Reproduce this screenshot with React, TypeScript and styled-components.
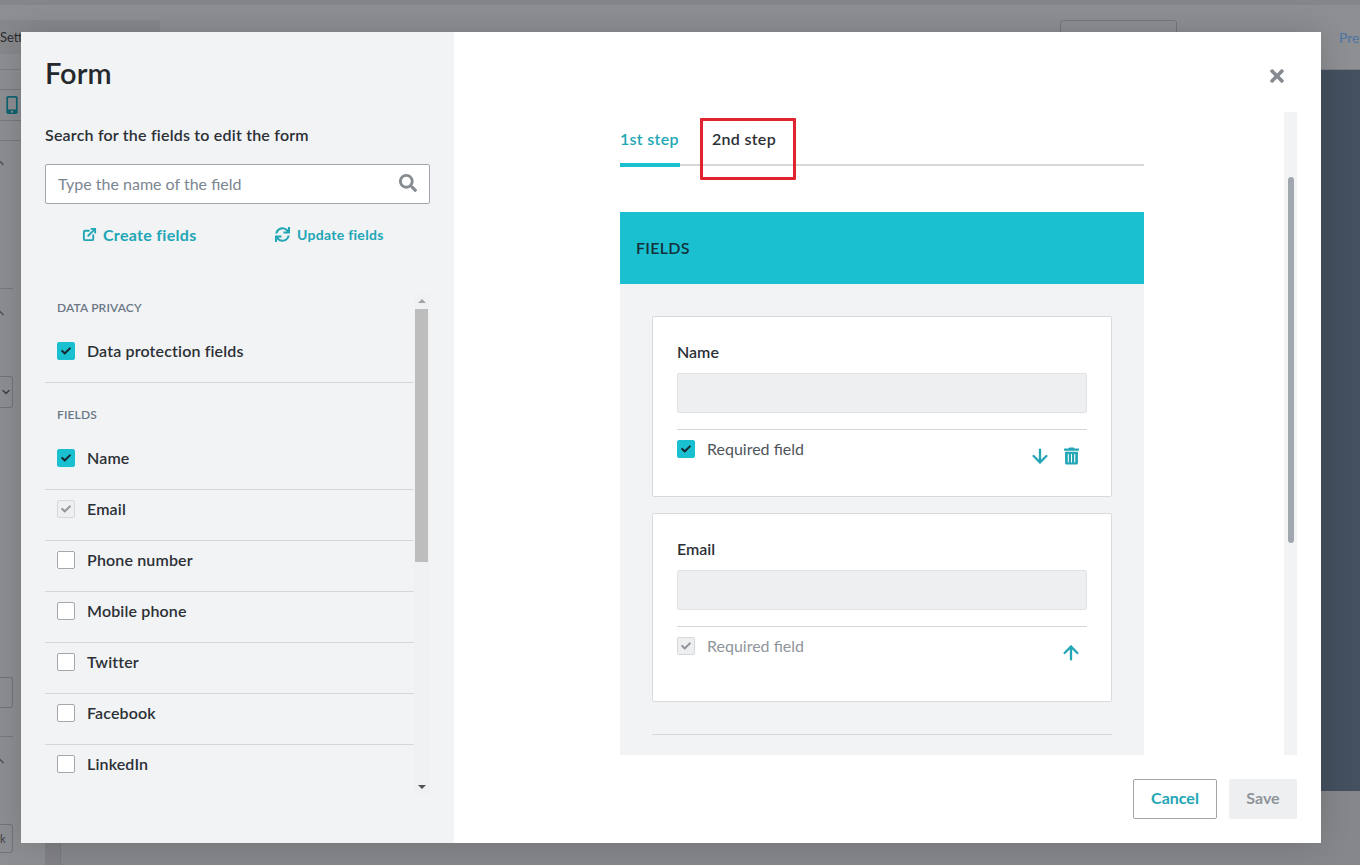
import React from 'react';
import styled, { createGlobalStyle } from 'styled-components';
import { FaCheck, FaMobileAlt, FaSearch, FaSync, FaTimes, FaTrashAlt } from 'react-icons/fa';
import { ArrowDown, ArrowUp, ChevronDown, ChevronUp, ExternalLink } from 'lucide-react';

const FONT = `"Lato", "Noto Sans", "Liberation Sans", sans-serif`;
const TEAL = '#1ac0cf';
const TEAL_TEXT = '#22a6b5';
const INK = '#2c3035';

const GlobalStyle = createGlobalStyle`
  html, body { margin: 0; padding: 0; background: #8d8e92; }
  * { box-sizing: border-box; }
  body { font-family: ${FONT}; color: ${INK}; }
`;

// ---- dimmed page behind the modal ----
const Page = styled.div`
  position: relative;
  width: 1360px;
  height: 865px;
  overflow: hidden;
  background: #8d8e92;
`;

const TopStrip = styled.div`
  height: 5px;
  background: #85868a;
`;

const Toolbar = styled.div`
  height: 65px;
  display: flex;
  align-items: flex-start;
  padding-top: 15px;
  background: #8e8f93;
  border-bottom: 1px solid #7d7e82;
`;

const ToolbarTab = styled.div`
  width: 160px;
  height: 34px;
  flex: none;
  padding-top: 9px;
  font-size: 13px;
  color: #2c2d30;
  background: #87888c;
  border-radius: 0 3px 0 0;
`;

const ToolbarButton = styled.div`
  width: 117px;
  height: 30px;
  flex: none;
  margin-left: 900px;
  border: 1px solid #77787c;
  border-radius: 3px;
`;

const ToolbarLink = styled.div`
  flex: none;
  margin-left: 162px;
  padding-top: 9px;
  font-size: 14px;
  white-space: nowrap;
  color: #4b76a6;
`;

const Workspace = styled.div`
  display: flex;
  height: 795px;
`;

const SideCol = styled.div`
  width: 45px;
  flex: none;
  color: #45474b;
`;

const SideRule = styled.div<{ $top: number; $short?: boolean }>`
  width: ${({ $short }) => ($short ? '13px' : '45px')};
  height: 1px;
  margin-top: ${({ $top }) => $top}px;
  background: #77787c;
`;

const SideIcon = styled.div<{ $top: number }>`
  height: 18px;
  margin-top: ${({ $top }) => $top}px;
  padding-left: 3px;
  color: #0e6470;
  font-size: 18px;
  line-height: 18px;
`;

const SideChevron = styled(ChevronUp)<{ $top: number }>`
  display: block;
  width: 14px;
  height: 12px;
  margin-top: ${({ $top }) => $top}px;
  margin-left: -7px;
  color: #4c4e52;
`;

const SideBox = styled.div<{ $top: number; $h: number }>`
  display: flex;
  align-items: center;
  width: 13px;
  height: ${({ $h }) => $h}px;
  margin-top: ${({ $top }) => $top}px;
  border: 1px solid #727377;
  border-left: none;
  border-radius: 0 3px 3px 0;
  font-size: 11px;
  color: #3f4044;
`;

const Gutter = styled.div`
  width: 16px;
  flex: none;
  background: #808185;
  border-right: 1px solid #76777b;
`;

const Stage = styled.div`
  flex: 1;
  display: flex;
  flex-direction: column;
`;

const DarkCanvas = styled.div`
  height: 721px;
  background: #44505f;
`;

const BottomBar = styled.div`
  flex: 1;
  background: #86878b;
`;

// ---- modal ----
const Modal = styled.div`
  position: absolute;
  left: 21px;
  top: 32px;
  width: 1300px;
  height: 811px;
  display: flex;
  background: #fff;
  box-shadow: 0 0 30px rgba(0, 0, 0, 0.16);
`;

const Sidebar = styled.aside`
  width: 433px;
  flex: none;
  padding: 0 24px;
  background: #f1f3f5;
`;

const Title = styled.h1`
  margin: 0;
  padding-top: 22px;
  font-size: 29px;
  line-height: 38px;
  font-weight: 600;
  color: #24282c;
`;

const SearchLabel = styled.div`
  margin-top: 33px;
  font-size: 16px;
  letter-spacing: 0.2px;
  line-height: 20px;
  font-weight: 600;
`;

const SearchBox = styled.div`
  display: flex;
  align-items: center;
  justify-content: space-between;
  height: 40px;
  width: 385px;
  margin-top: 19px;
  padding: 0 12px 2px;
  background: #fff;
  border: 1px solid #a2a6ab;
  border-radius: 2px;
  font-size: 16px;
  color: #7c8691;
`;

const SearchIcon = styled(FaSearch)`
  width: 18px;
  height: 18px;
  color: #858b91;
`;

const LinkRow = styled.div`
  display: flex;
  width: 385px;
  height: 22px;
  margin-top: 19px;
  padding-left: 37px;
`;

const ActionLink = styled.a<{ $size: number; $w: number }>`
  display: flex;
  align-items: center;
  gap: 6px;
  width: ${({ $w }) => $w}px;
  font-size: ${({ $size }) => $size}px;
  letter-spacing: 0.3px;
  font-weight: 700;
  color: ${TEAL_TEXT};
`;

const LinkOut = styled(ExternalLink)`
  width: 15px;
  height: 15px;
`;

const LinkSync = styled(FaSync)`
  width: 15px;
  height: 15px;
  margin-right: 1px;
`;

const ListWrap = styled.div`
  display: flex;
  width: 385px;
  height: 502px;
  margin-top: 48px;
  overflow: hidden;
`;

const FieldList = styled.div`
  width: 369px;
  flex: none;
`;

const GroupLabel = styled.div<{ $top: number }>`
  padding: ${({ $top }) => $top}px 0 0 12px;
  margin-bottom: 16px;
  font-size: 12px;
  letter-spacing: 0.15px;
  line-height: 16px;
  font-weight: 600;
  color: #6b7785;
`;

const FieldRow = styled.div`
  display: flex;
  gap: 12px;
  padding: 10px 12px 22px;
  border-bottom: 1px solid #d5d7da;
  font-size: 16px;
  letter-spacing: 0.15px;
  line-height: 18px;
  font-weight: 600;
  color: ${INK};
  &:last-child {
    border-bottom: none;
  }
`;

const Box = styled.span<{ $state: 'on' | 'off' | 'locked' }>`
  display: flex;
  align-items: center;
  justify-content: center;
  width: 18px;
  height: 18px;
  flex: none;
  border-radius: 2px;
  font-size: 10px;
  background: ${({ $state }) => ($state === 'on' ? TEAL : $state === 'off' ? '#fff' : '#eeeff1')};
  border: 1px solid ${({ $state }) => ($state === 'on' ? TEAL : $state === 'off' ? '#a4a8ad' : '#d5d7da')};
  color: ${({ $state }) => ($state === 'on' ? '#17252e' : '#8f959b')};
`;

const ListTrack = styled.div`
  width: 16px;
  height: 502px;
  flex: none;
  display: flex;
  flex-direction: column;
  align-items: center;
  background: #f0f1f2;
`;

const ArrowCell = styled.div<{ $down?: boolean }>`
  height: 16px;
  flex: none;
  display: flex;
  align-items: center;
  margin-top: ${({ $down }) => ($down ? 'auto' : '0')};
  &::before {
    content: '';
    border-left: 4px solid transparent;
    border-right: 4px solid transparent;
    border-bottom: ${({ $down }) => ($down ? '0' : '4px solid #a3a3a3')};
    border-top: ${({ $down }) => ($down ? '4px solid #505050' : '0')};
  }
`;

const ListThumb = styled.div`
  width: 13px;
  height: 253px;
  margin-right: 1px;
  background: #bdbdbd;
`;

const Main = styled.main`
  flex: 1;
  display: flex;
  flex-direction: column;
  padding-right: 24px;
`;

const CloseRow = styled.div`
  height: 80px;
  flex: none;
  display: flex;
  justify-content: flex-end;
  padding: 34px 13px 0 0;
`;

const CloseIcon = styled(FaTimes)`
  width: 14px;
  height: 20px;
  color: #858b91;
`;

const ScrollArea = styled.div`
  height: 643px;
  flex: none;
  display: flex;
  justify-content: space-between;
  padding-left: 166px;
  overflow: hidden;
`;

const Content = styled.div`
  width: 524px;
  flex: none;
`;

const Tabs = styled.div`
  position: relative;
  display: flex;
  gap: 32px;
  height: 54px;
  border-bottom: 2px solid #d8d8dc;
`;

const Tab = styled.div<{ $active?: boolean }>`
  height: 55px;
  padding-top: 17px;
  width: ${({ $active }) => ($active ? '60px' : 'auto')};
  font-size: 16px;
  letter-spacing: 0.3px;
  line-height: 20px;
  font-weight: 600;
  white-space: nowrap;
  color: ${({ $active }) => ($active ? TEAL_TEXT : INK)};
  border-bottom: ${({ $active }) => ($active ? `4px solid ${TEAL}` : 'none')};
`;

// annotation drawn over the tab in the screenshot
const Highlight = styled.div`
  position: absolute;
  left: 80px;
  top: 6px;
  width: 96px;
  height: 62px;
  border: 3px solid #e0232e;
  border-radius: 1px;
`;

const PanelHead = styled.div`
  display: flex;
  align-items: center;
  height: 72px;
  margin-top: 46px;
  padding: 0 0 2px 16px;
  background: ${TEAL};
  font-size: 16px;
  letter-spacing: 0.3px;
  font-weight: 600;
  color: #14303a;
`;

const Panel = styled.div`
  display: flex;
  flex-direction: column;
  gap: 16px;
  padding: 32px;
  background: #f1f3f5;
`;

const Card = styled.div<{ $h: number }>`
  height: ${({ $h }) => $h}px;
  padding: 25px 24px 0;
  background: #fff;
  border: 1px solid #d8dadd;
  border-radius: 2px;
`;

const CardLabel = styled.div`
  font-size: 16px;
  line-height: 20px;
  font-weight: 600;
  color: ${INK};
`;

const FakeInput = styled.div`
  height: 40px;
  margin-top: 11px;
  background: #eeeff1;
  border: 1px solid #e0e2e5;
  border-radius: 2px;
`;

const CardFoot = styled.div`
  display: flex;
  align-items: flex-start;
  gap: 12px;
  margin-top: 16px;
  padding-top: 10px;
  border-top: 1px solid #d5d7da;
`;

const RequiredText = styled.span<{ $muted?: boolean }>`
  font-size: 16px;
  line-height: 18px;
  color: ${({ $muted }) => ($muted ? '#8f959b' : '#50555b')};
`;

const CardTools = styled.div`
  display: flex;
  align-items: center;
  gap: 13px;
  height: 18px;
  margin: 7px 8px 0 auto;
  color: ${TEAL_TEXT};
`;

const MoveDown = styled(ArrowDown)`
  width: 22px;
  height: 22px;
`;

const MoveUp = styled(ArrowUp)`
  width: 22px;
  height: 22px;
  margin-right: -3px;
`;

const TrashIcon = styled(FaTrashAlt)`
  width: 15px;
  height: 18px;
`;

const PanelRule = styled.div`
  height: 1px;
  margin-top: 16px;
  background: #d5d7da;
`;

const PageTrack = styled.div`
  width: 13px;
  height: 643px;
  flex: none;
  padding-top: 65px;
  display: flex;
  justify-content: center;
  background: #f1f3f5;
`;

const PageThumb = styled.div`
  width: 6px;
  height: 366px;
  border-radius: 3px;
  background: #a0a7ae;
`;

const Footer = styled.div`
  display: flex;
  justify-content: flex-end;
  gap: 12px;
  padding-top: 24px;
`;

const Button = styled.button<{ $primary?: boolean; $w: number }>`
  width: ${({ $w }) => $w}px;
  height: 40px;
  padding: 0 0 3px;
  font-family: ${FONT};
  font-size: 16px;
  font-weight: 700;
  border-radius: 2px;
  background: ${({ $primary }) => ($primary ? '#eeeff1' : '#fff')};
  border: 1px solid ${({ $primary }) => ($primary ? '#eeeff1' : '#a0a5aa')};
  color: ${({ $primary }) => ($primary ? '#8f959b' : TEAL_TEXT)};
`;

const Check = ({ state }: { state: 'on' | 'off' | 'locked' }) => (
  <Box $state={state}>{state !== 'off' && <FaCheck />}</Box>
);

const fields: { name: string; state: 'on' | 'off' | 'locked' }[] = [
  { name: 'Name', state: 'on' },
  { name: 'Email', state: 'locked' },
  { name: 'Phone number', state: 'off' },
  { name: 'Mobile phone', state: 'off' },
  { name: 'Twitter', state: 'off' },
  { name: 'Facebook', state: 'off' },
  { name: 'LinkedIn', state: 'off' },
];

export default function App() {
  return (
    <Page>
      <GlobalStyle />
      <TopStrip />
      <Toolbar>
        <ToolbarTab>Settings</ToolbarTab>
        <ToolbarButton />
        <ToolbarLink>Preview</ToolbarLink>
      </Toolbar>
      <Workspace>
        <SideCol>
          <SideRule $top={19} />
          <SideIcon $top={6}><FaMobileAlt /></SideIcon>
          <SideRule $top={6} />
          <SideRule $top={19} />
          <SideChevron $top={16} strokeWidth={3} />
          <SideRule $top={119} $short />
          <SideChevron $top={18} strokeWidth={3} />
          <SideBox $top={57} $h={32}><ChevronDown size={12} strokeWidth={3} /></SideBox>
          <SideBox $top={269} $h={31} />
          <SideRule $top={28} $short />
          <SideChevron $top={18} strokeWidth={3} />
          <SideBox $top={57} $h={29}>k</SideBox>
        </SideCol>
        <Gutter />
        <Stage>
          <DarkCanvas />
          <BottomBar />
        </Stage>
      </Workspace>

      <Modal>
        <Sidebar>
          <Title>Form</Title>
          <SearchLabel>Search for the fields to edit the form</SearchLabel>
          <SearchBox>
            Type the name of the field
            <SearchIcon />
          </SearchBox>
          <LinkRow>
            <ActionLink $size={16} $w={193}><LinkOut strokeWidth={3} />Create fields</ActionLink>
            <ActionLink $size={14} $w={120}><LinkSync />Update fields</ActionLink>
          </LinkRow>
          <ListWrap>
            <FieldList>
              <GroupLabel $top={7}>DATA PRIVACY</GroupLabel>
              <FieldRow><Check state="on" />Data protection fields</FieldRow>
              <GroupLabel $top={24}>FIELDS</GroupLabel>
              {fields.map(f => (
                <FieldRow key={f.name}><Check state={f.state} />{f.name}</FieldRow>
              ))}
            </FieldList>
            <ListTrack>
              <ArrowCell />
              <ListThumb />
              <ArrowCell $down />
            </ListTrack>
          </ListWrap>
        </Sidebar>
        <Main>
          <CloseRow><CloseIcon /></CloseRow>
          <ScrollArea>
            <Content>
              <Tabs>
                <Tab $active>1st step</Tab>
                <Tab>2nd step</Tab>
                <Highlight />
              </Tabs>
              <PanelHead>FIELDS</PanelHead>
              <Panel>
                <Card $h={181}>
                  <CardLabel>Name</CardLabel>
                  <FakeInput />
                  <CardFoot>
                    <Check state="on" />
                    <RequiredText>Required field</RequiredText>
                    <CardTools><MoveDown strokeWidth={2.5} /><TrashIcon /></CardTools>
                  </CardFoot>
                </Card>
                <Card $h={189}>
                  <CardLabel>Email</CardLabel>
                  <FakeInput />
                  <CardFoot>
                    <Check state="locked" />
                    <RequiredText $muted>Required field</RequiredText>
                    <CardTools><MoveUp strokeWidth={2.5} /></CardTools>
                  </CardFoot>
                </Card>
                <PanelRule />
              </Panel>
            </Content>
            <PageTrack><PageThumb /></PageTrack>
          </ScrollArea>
          <Footer>
            <Button $w={84}>Cancel</Button>
            <Button $w={68} $primary>Save</Button>
          </Footer>
        </Main>
      </Modal>
    </Page>
  );
}
